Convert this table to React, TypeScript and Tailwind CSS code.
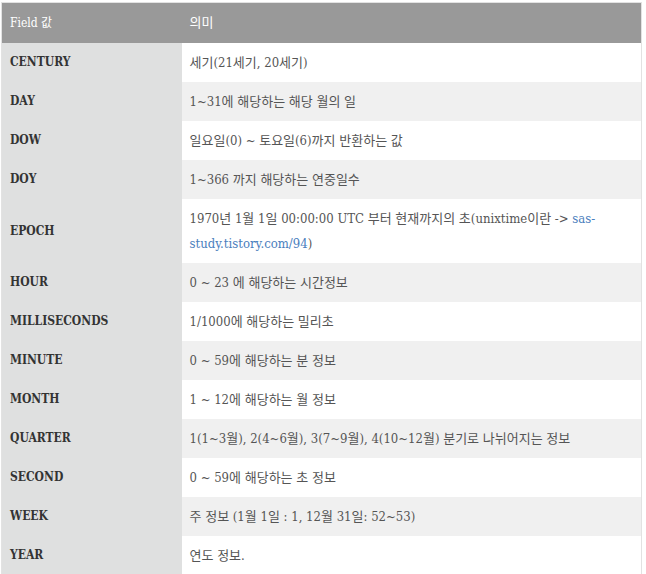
const rows: { field: string; desc: React.ReactNode }[] = [
  { field: "CENTURY", desc: "세기(21세기, 20세기)" },
  { field: "DAY", desc: "1~31에 해당하는 해당 월의 일" },
  { field: "DOW", desc: "일요일(0) ~ 토요일(6)까지 반환하는 값" },
  { field: "DOY", desc: "1~366 까지 해당하는 연중일수" },
  {
    field: "EPOCH",
    desc: (
      <>
        <span>
          1970년 1월 1일 00:00:00 UTC 부터 현재까지의 초(unixtime이란 -&gt;{" "}
          <a className="text-[#4a7ebd]">sas-</a>
        </span>
        <br />
        <span>
          <a className="text-[#4a7ebd]">study.tistory.com/94</a>)
        </span>
      </>
    ),
  },
  { field: "HOUR", desc: "0 ~ 23 에 해당하는 시간정보" },
  { field: "MILLISECONDS", desc: "1/1000에 해당하는 밀리초" },
  { field: "MINUTE", desc: "0 ~ 59에 해당하는 분 정보" },
  { field: "MONTH", desc: "1 ~ 12에 해당하는 월 정보" },
  { field: "QUARTER", desc: "1(1~3월), 2(4~6월), 3(7~9월), 4(10~12월) 분기로 나뉘어지는 정보" },
  { field: "SECOND", desc: "0 ~ 59에 해당하는 초 정보" },
  { field: "WEEK", desc: "주 정보 (1월 1일 : 1, 12월 31일: 52~53)" },
  { field: "YEAR", desc: "연도 정보." },
];

export default function App() {
  return (
    <div
      className="bg-white w-[646px] h-[574px] pt-[2px] pl-[1px]"
      style={{ fontFamily: '"DejaVu Serif Condensed", "Liberation Serif", "Noto Sans CJK KR", serif' }}
    >
      <table className="w-[641px] border-collapse border border-[#e2e2e2] text-[13px]">
        <thead>
          <tr className="bg-[#999999] h-[40px] text-white">
            <th className="w-[180px] pl-[8px] text-left text-[12px] font-normal">Field 값</th>
            <th className="pl-[8px] text-left font-normal">의미</th>
          </tr>
        </thead>
        <tbody>
          {rows.map((r, i) => (
            <tr key={r.field} className={i % 2 === 0 ? "bg-white" : "bg-[#f0f0f0]"}>
              <td className="bg-[#dfe0e0] pl-[8px] text-[12px] font-bold text-[#333333] align-middle">{r.field}</td>
              <td className="pl-[8px] pr-4 py-[7px] leading-[25px] text-[#555555]">{r.desc}</td>
            </tr>
          ))}
        </tbody>
      </table>
    </div>
  );
}
